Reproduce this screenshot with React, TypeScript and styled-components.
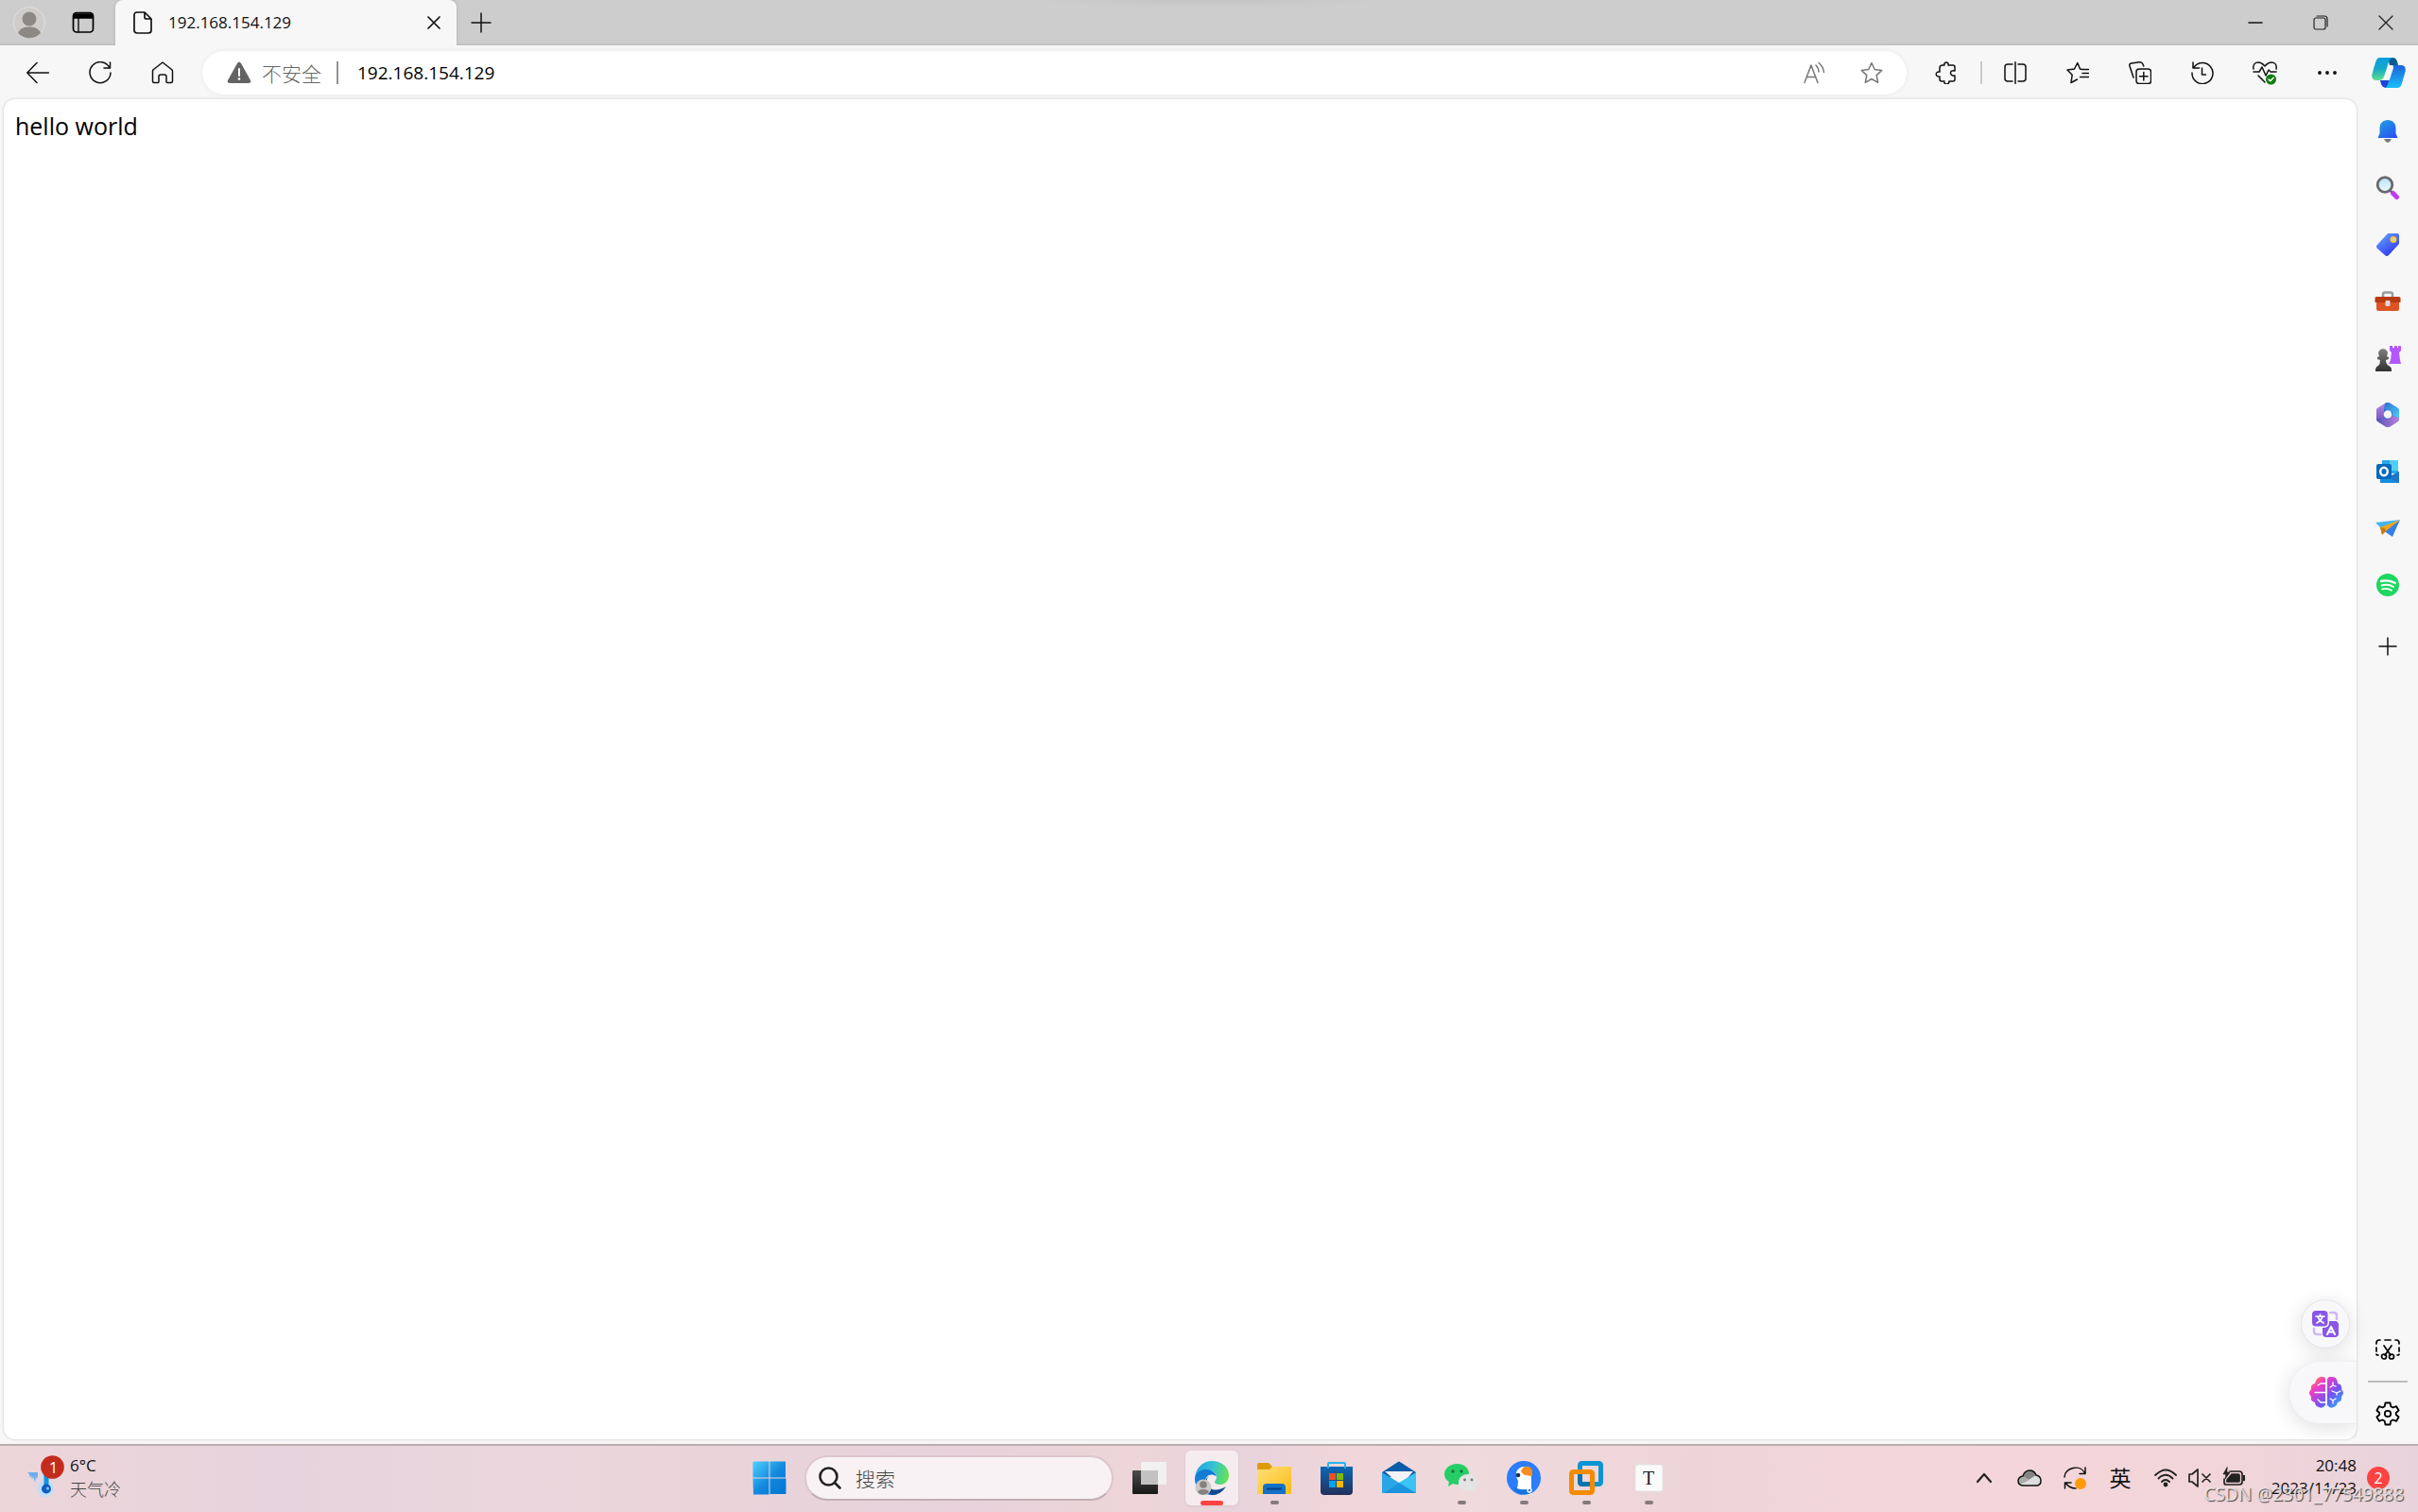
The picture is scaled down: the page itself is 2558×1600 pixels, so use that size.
import React from "react";
import styled, { createGlobalStyle, css } from "styled-components";

const Global = createGlobalStyle`
  *, *::before, *::after { box-sizing: border-box; }
  html, body { margin: 0; padding: 0; }
  body {
    font-family: "Open Sans", "Noto Sans", "Noto Sans CJK SC", sans-serif;
    color: #111;
    background: #f7f7f7;
  }
  button, input { font: inherit; color: inherit; }
`;

const Desktop = styled.div`
  position: relative;
  display: flex;
  flex-direction: column;
  min-height: 100vh;
`;

const Slot = styled.button<{ $w?: number; $h?: number }>`
  display: flex;
  flex: none;
  align-items: center;
  justify-content: center;
  width: ${(p) => p.$w ?? 66}px;
  height: ${(p) => p.$h ?? 48}px;
  margin: 0;
  padding: 0;
  border: 0;
  background: transparent;
`;

const Glyph = styled.svg<{ $w: number; $h: number }>`
  display: block;
  flex: none;
  width: ${(p) => p.$w}px;
  height: ${(p) => p.$h}px;
  fill: none;
  stroke-linecap: round;
  stroke-linejoin: round;
`;

type IconProps = {
  w?: number;
  h?: number;
  stroke?: string;
  sw?: number;
  children: React.ReactNode;
};

const Icon = ({ w = 24, h = 24, stroke = "none", sw = 1.5, children }: IconProps) => (
  <Glyph $w={w} $h={h} viewBox={`0 0 ${w} ${h}`} stroke={stroke} strokeWidth={sw} aria-hidden="true">
    {children}
  </Glyph>
);

/* ---------- title bar ---------- */

const TitleBar = styled.header`
  display: flex;
  height: 48px;
  background:
    radial-gradient(ellipse 190px 8px at 50% 0, #c4c4c4, transparent),
    linear-gradient(#cdcdcd 45px, #bdbdbd);
`;

const TitleStart = styled.div`
  display: flex;
  align-items: center;
  width: 122px;
`;

const Tab = styled.div`
  position: relative;
  display: flex;
  align-items: center;
  width: 361px;
  padding-left: 17px;
  background: #f7f7f7;
  border-radius: 8px 8px 0 0;
  box-shadow: 0 0 3px #aaa;
  clip-path: inset(0 -4px 0 -4px);
`;

const TabTitle = styled.button`
  display: flex;
  flex: 1;
  align-items: center;
  gap: 15px;
  height: 48px;
  padding: 0;
  border: 0;
  background: none;
  font-size: 17px;
  line-height: 24px;
`;

const WindowControls = styled.div`
  display: flex;
  margin-left: auto;
`;

/* ---------- toolbar ---------- */

const Toolbar = styled.nav`
  display: flex;
  align-items: center;
  height: 57px;
  padding-left: 7px;
  background: #f7f7f7;
`;

const AddressBar = styled.form`
  display: flex;
  flex: 1;
  align-items: center;
  height: 46px;
  margin: 0 9px;
  padding: 0 7px 0 26px;
  border-radius: 23px;
  background: #fff;
  box-shadow: 0 0 4px #e6e6e6;
`;

const Security = styled.button`
  display: flex;
  align-items: center;
  gap: 11px;
  padding: 0;
  border: 0;
  background: none;
  color: #666;
  font-family: "Noto Sans CJK SC", sans-serif;
  font-size: 21px;
  font-weight: 300;
  line-height: 24px;
`;

const Rule = styled.span<{ $tone: string; $side?: number }>`
  width: 2px;
  height: 24px;
  margin: 0 ${(p) => p.$side ?? 0}px;
  background: ${(p) => p.$tone};
`;

const UrlInput = styled.input`
  flex: 1;
  min-width: 0;
  padding: 0;
  border: 0;
  outline: 0;
  background: none;
  color: #000;
  font-size: 19px;
  line-height: 24px;
`;

const ToolDivider = styled.span`
  display: flex;
  justify-content: center;
  width: 7px;
`;

/* ---------- body ---------- */

const Body = styled.div`
  display: flex;
  flex: 1;
  padding-left: 4px;
  background: #f7f7f7;
`;

const Page = styled.main`
  position: relative;
  flex: 1;
  margin-bottom: 5px;
  padding: 11px 12px;
  border-radius: 12px;
  background: #fff;
  box-shadow: 0 0 3px #c4c4c4;
`;

const Hello = styled.p`
  margin: 0;
  color: #000;
  font-size: 25px;
  line-height: 34px;
`;

const Floating = styled.div`
  position: absolute;
  right: 0;
  bottom: 16px;
  display: flex;
  flex-direction: column;
  align-items: flex-end;
  gap: 13px;
`;

const floatBase = css`
  display: flex;
  align-items: center;
  justify-content: center;
  padding: 0;
  background: #f8f8fa;
  box-shadow: 0 4px 22px rgba(0, 0, 0, 0.13);
`;

const TranslateButton = styled.button`
  ${floatBase}
  width: 52px;
  height: 52px;
  margin-right: 7px;
  border: 1px solid #e4e4ee;
  border-radius: 50%;
`;

const BrainButton = styled.button`
  ${floatBase}
  width: 72px;
  height: 67px;
  padding-left: 6px;
  border: 1px solid #efeff2;
  border-right: 0;
  border-radius: 34px 0 0 34px;
  clip-path: inset(-30px 0 -14px -30px);
`;

const Sidebar = styled.aside`
  display: flex;
  flex-direction: column;
  align-items: center;
  width: 65px;
  padding: 4px 0 2px;
`;

const SideFoot = styled.div`
  display: flex;
  flex-direction: column;
  align-items: center;
  gap: 3px;
  margin-top: auto;
`;

const SideLine = styled.hr`
  width: 42px;
  height: 2px;
  margin: 0;
  border: 0;
  background: #bdbdbd;
`;

/* ---------- taskbar ---------- */

const Taskbar = styled.footer`
  display: grid;
  grid-template-columns: 1fr auto 1fr;
  align-items: center;
  height: 72px;
  padding-bottom: 2px;
  border-top: 2px solid #baacaf;
  background: linear-gradient(
    90deg,
    #edd6da 0%,
    #e7d3dd 11%,
    #ead6dc 22%,
    #ead4da 30%,
    #e8d2dc 39%,
    #edd5d8 47%,
    #e8d3dc 51%,
    #f0d6da 56%,
    #efdadc 61%,
    #eed4d9 70%,
    #f3d5da 83%,
    #f2d5d9 91%,
    #e8d3dc 100%
  );
`;

const Weather = styled.button`
  display: flex;
  align-items: center;
  gap: 6px;
  justify-self: start;
  padding: 0 0 3px 28px;
  border: 0;
  background: none;
  text-align: left;
  font-size: 17px;
  line-height: 24px;
`;

const WeatherIcon = styled.span`
  display: flex;
`;

const Stack = styled.span`
  display: flex;
  flex-direction: column;
`;

const Condition = styled.span`
  color: #444;
  font-family: "Noto Sans CJK SC", sans-serif;
  font-size: 18px;
  font-weight: 300;
`;

const Dock = styled.div`
  display: flex;
  align-items: center;
`;

const SearchBox = styled.label`
  display: flex;
  align-items: center;
  gap: 15px;
  width: 327px;
  height: 48px;
  margin: 0 5px 0 4px;
  padding: 0 13px;
  border: 2px solid #dcc7cc;
  border-bottom-color: #bfaeb1;
  border-radius: 24px;
  background: #f8f2f4;
`;

const SearchInput = styled.input`
  flex: 1;
  min-width: 0;
  padding: 0;
  border: 0;
  outline: 0;
  background: none;
  font-family: "Noto Sans CJK SC", sans-serif;
  font-size: 21px;
  font-weight: 300;
  line-height: 30px;
  &::placeholder { color: #444; opacity: 1; }
`;

const AppButton = styled.button<{ $active?: boolean }>`
  display: grid;
  grid-template-rows: 11px 36px 6px 5px;
  justify-items: center;
  width: 56px;
  height: 58px;
  margin: 0 5px;
  padding: 0;
  border: 0;
  border-radius: 6px;
  background: ${(p) => (p.$active ? "#f6ebee" : "transparent")};
  box-shadow: ${(p) => (p.$active ? "0 1px 1px 1px #dfcbd0" : "none")};
  & > svg { grid-row: 2; }
`;

const Indicator = styled.span<{ $active?: boolean }>`
  grid-row: 4;
  width: ${(p) => (p.$active ? 24 : 9)}px;
  height: ${(p) => (p.$active ? 5 : 4)}px;
  border-radius: 3px;
  background: ${(p) => (p.$active ? "#ff4343" : "#857a7d")};
`;

const Tray = styled.div`
  display: flex;
  align-items: center;
  justify-self: end;
  padding-right: 30px;
`;

const InputMode = styled(Slot)`
  padding-bottom: 2px;
  font-family: "Noto Sans CJK SC", sans-serif;
  font-size: 23px;
`;

const SystemGroup = styled.button`
  display: flex;
  align-items: center;
  gap: 12px;
  height: 48px;
  margin: 0 6px;
  padding: 0 6px;
  border: 0;
  background: none;
`;

const Clock = styled.button`
  display: flex;
  flex-direction: column;
  align-items: flex-end;
  width: 106px;
  padding: 0 0 2px;
  border: 0;
  background: none;
  font-size: 17px;
  line-height: 24px;
`;

const Notices = styled.button`
  width: 24px;
  height: 24px;
  margin-left: 11px;
  padding: 0;
  border: 0;
  border-radius: 50%;
  background: #ff4343;
  color: #fff;
  font-size: 16px;
  line-height: 24px;
`;

const Watermark = styled.span`
  position: absolute;
  right: 15px;
  bottom: 6px;
  color: rgba(236, 230, 232, 0.9);
  font-family: "Noto Sans", sans-serif;
  font-size: 19px;
  line-height: 26px;
  text-shadow: 1px 1px 1px #444;
  pointer-events: none;
`;

/* ---------- icons ---------- */

const Avatar = ({ size = 34 }: { size?: number }) => (
  <Glyph $w={size} $h={size} viewBox="0 0 34 34" aria-hidden="true">
    <circle cx="17" cy="17" r="16.5" fill="#cfcdc9" stroke="#e2e0dc" />
    <circle cx="17" cy="13" r="7.5" fill="#8c8884" />
    <path d="M5 28c2-5 6.500-6.500 12-6.500S27 23 29 28a16 16 0 0 1-24 0z" fill="#8c8884" />
  </Glyph>
);

const Copilot = () => (
  <Icon w={36} h={32}>
    <defs>
      <linearGradient id="cpA" x1="0" y1="0" x2="0" y2="1">
        <stop offset="0" stopColor="#0b9ddf" /><stop offset=".5" stopColor="#15a9c9" /><stop offset="1" stopColor="#5fe08a" />
      </linearGradient>
      <linearGradient id="cpB" x1="0" y1="0" x2="0" y2="1">
        <stop offset="0" stopColor="#1d62d8" /><stop offset="1" stopColor="#18c0fa" />
      </linearGradient>
    </defs>
    <path d="M17 0h5c4 0 5 3 6 8h-9z" fill="#0a5c8c" />
    <path d="M9 24h10l-3 8c-4 0-6-2-7-8z" fill="#1d45d6" />
    <path d="M9 0h13c-3 1-4 4-5 8l-4 12c-1 3-3 4-6 4H5c-4 0-5.500-3-4.500-7L4 5c1-3 2-5 5-5z" fill="url(#cpA)" />
    <path d="M22 8h9c4 0 5.500 3 4.500 7L32 27c-1 3-2 5-5 5H14c2-1 3-3 4-6l5-15z" fill="url(#cpB)" />
    <path d="M23 8.500h-2q-3 0-4 3l-3 9q-1 2-2 3h2q3 0 4-3z" fill="#f7f7f7" />
  </Icon>
);

const Bell = () => (
  <Icon w={22} h={26}>
    <defs><linearGradient id="bell" x1="0" y1="0" x2=".7" y2="1"><stop stopColor="#1aa5e4" /><stop offset="1" stopColor="#2a55f0" /></linearGradient></defs>
    <path d="M7 21h8l-2 3c-1 1-3 1-4 0z" fill="#74777c" />
    <path d="M11 1c5 0 8.500 3.500 8.500 8.500V15l2 5H.5l2-5V9.500C2.500 4.500 6 1 11 1z" fill="url(#bell)" />
  </Icon>
);

const Magnifier = () => (
  <Icon w={26} h={26}>
    <defs><linearGradient id="lens" x1="0" y1="0" x2="0" y2="1"><stop stopColor="#b8e2fa" /><stop offset="1" stopColor="#eef8ff" /></linearGradient></defs>
    <path d="M15 15l4 4" stroke="#666" strokeWidth="2.500" />
    <path d="M18.500 18.500l4 4" stroke="#c03bf3" strokeWidth="5" />
    <circle cx="10" cy="9.500" r="7.800" fill="url(#lens)" stroke="#68696b" strokeWidth="2.800" />
  </Icon>
);

const Tag = () => (
  <Icon w={26} h={26}>
    <defs><linearGradient id="tag" x1="0" y1="0" x2=".7" y2="1"><stop stopColor="#64adff" /><stop offset="1" stopColor="#3136ef" /></linearGradient></defs>
    <path d="M13 1h10q2 0 2 2v9L14 24q-2 2-4 0L2 17q-2-2 0-4z" fill="url(#tag)" />
    <circle cx="19" cy="7.500" r="2.500" stroke="#ffc928" strokeWidth="2" fill="#c9cfe8" />
  </Icon>
);

const Briefcase = () => (
  <Icon w={28} h={22}>
    <path d="M9 6V3.500q0-2 2-2h6q2 0 2 2V6" stroke="#999ca0" strokeWidth="2.500" />
    <path d="M2 10h24v9q0 2-2 2H4q-2 0-2-2z" fill="#df5221" />
    <path d="M.5 7.500q0-1.500 1.500-1.500h24q1.500 0 1.500 1.500V12H.5z" fill="#b93a12" />
    <rect x="11.500" y="10" width="5" height="6" rx="1" fill="#d7dadd" />
  </Icon>
);

const Chess = () => (
  <Icon w={28} h={28}>
    <defs><linearGradient id="pawn" x1="0" y1="0" x2="0" y2="1"><stop stopColor="#808080" /><stop offset="1" stopColor="#303030" /></linearGradient></defs>
    <path d="M16 1h3v2h2V1h3v2h1V1h3v5l-2 2 1 8 1 4H15l2-4 1-8-2-2z" fill="#b457ff" />
    <path d="M9 4a5 5 0 0 1 4 8l2 1v2l-3 1q0 4 3 6 3 1 3 5v1H1v-1q0-4 3-5 2-2 2-6l-3-1v-2l2-1a5 5 0 0 1 4-8z" fill="url(#pawn)" />
  </Icon>
);

const M365 = () => (
  <Icon w={24} h={26}>
    <defs>
      <linearGradient id="ma" x1="0" y1="0" x2="0" y2="1"><stop stopColor="#bb88df" /><stop offset="1" stopColor="#6f55c8" /></linearGradient>
      <linearGradient id="mb" x1="0" y1="0" x2="1" y2="1"><stop stopColor="#2c70d0" /><stop offset="1" stopColor="#4fd0f6" /></linearGradient>
      <linearGradient id="mc" x1="0" y1="0" x2="1" y2="0"><stop stopColor="#5552b8" /><stop offset="1" stopColor="#bd82dc" /></linearGradient>
    </defs>
    <path d="M10 .5q2-1 4 0l8 5q2 1 2 3v9q0 2-2 3l-8 5q-2 1-4 0l-8-5q-2-1-2-3v-9q0-2 2-3z" fill="#3a68c8" />
    <path d="M10 .5L2 5.500Q0 6.500 0 8.500v9q0 1 2 2l6-3.500V7z" fill="url(#ma)" />
    <path d="M9 1l1-.5q2-1 4 0l8 5q2 1 2 3v8l-7-2.500V10l-9-3z" fill="url(#mb)" />
    <path d="M0 17q0 2 2 3.500l8 5q2 1 4 0l8-5q2-1.500 2-4l-7-2.500-5 4-4-2z" fill="url(#mc)" />
    <circle cx="12" cy="12.500" r="4.300" fill="#f7f7f7" />
  </Icon>
);

const Outlook = () => (
  <Icon w={24} h={24}>
    <path d="M6 0h17v14H5z" fill="#2aa7e8" /><path d="M14 0h9v11h-9z" fill="#50d0f7" />
    <path d="M4 13l10 5 10-6v12H4z" fill="#168dde" /><path d="M24 12v12L12 18z" fill="#1f75c8" />
    <rect y="4" width="16" height="16" rx="2" fill="#0668b9" />
    <ellipse cx="8" cy="12" rx="3.800" ry="4.200" stroke="#fff" strokeWidth="2.400" />
  </Icon>
);

const PaperPlane = () => (
  <Icon w={26} h={20}>
    <path d="M0 4l26-3L6 10z" fill="#40b6f2" />
    <path d="M26 1L9 13l9 6z" fill="#3480e8" />
    <path d="M5 9l21-8-15 12-4 4z" fill="#f0a51c" />
    <path d="M11 13l-4 4-2-8 5 1z" fill="#c77c08" />
  </Icon>
);

const Spotify = () => (
  <Icon w={24} h={24}>
    <circle cx="12" cy="12" r="12" fill="#1ed760" />
    <path d="M5 8q8-2 15 2" stroke="#fff" strokeWidth="2.400" />
    <path d="M5.500 12.500q7-2 12.500 1.500" stroke="#fff" strokeWidth="2" />
    <path d="M6 16.500q6-1.500 10 1.300" stroke="#fff" strokeWidth="1.700" />
  </Icon>
);

const Screenshot = () => (
  <Icon w={26} h={24} stroke="#000" sw={1.700}>
    <path d="M1 6V5q0-3 3-3h1M10 2h6M21 2h1q3 0 3 3v1M1 10v4M25 10v4M3 18q-2 0-2-1M23 18q2 0 2-1" />
    <path d="M9 8l7 10M17 8l-7 10" />
    <circle cx="9" cy="19.500" r="2.500" /><circle cx="17" cy="19.500" r="2.500" />
  </Icon>
);

const Gear = () => (
  <Icon w={26} h={26} stroke="#000" sw={1.800}>
    <path d="M10.500 1.500h5l.8 3.700 2.200 1.300 3.600-1.300 2.500 4.300-2.800 2.500v2l2.800 2.500-2.500 4.300-3.600-1.300-2.200 1.300-.8 3.700h-5l-.8-3.700-2.200-1.300-3.600 1.300-2.500-4.300L4.200 14v-2L1.400 9.500l2.500-4.300 3.600 1.300 2.200-1.300z" />
    <circle cx="13" cy="13" r="3.200" />
  </Icon>
);

const TranslateIcon = () => (
  <Icon w={28} h={28}>
    <path d="M19 2h4q3 0 3 3v4M2 19v3q0 3 3 3h4" stroke="#cdb9f4" strokeWidth="2.500" />
    <rect x="11" y="11" width="17" height="17" rx="4" fill="#8857e6" />
    <rect x="-1" y="-1" width="19" height="19" rx="5" fill="#f8f8fa" />
    <rect width="16.500" height="16.500" rx="4" fill="#8857e6" />
    <path d="M4 6h9M8.500 4v2M11 6q-1 4-6 7M6 6q1 4 6 7" stroke="#fff" strokeWidth="1.700" />
    <path d="M16 25l4-8 4 8M17.500 22.500h5" stroke="#fff" strokeWidth="2" />
  </Icon>
);

const Brain = () => (
  <Icon w={36} h={33}>
    <defs>
      <linearGradient id="brain" x1="0" y1="0" x2="1" y2="1">
        <stop offset="0" stopColor="#ffa321" /><stop offset=".28" stopColor="#f33bc4" /><stop offset=".62" stopColor="#7255f3" /><stop offset="1" stopColor="#1fc0ff" />
      </linearGradient>
    </defs>
    <path d="M17 2v28q-3 4-7 2-4-1-4-5-5-1-4-6-4-4 0-8-1-5 4-6 1-6 6-7 4-1 5 2zM19 2q2-3 6-2 5 1 5 7 5 1 4 6 4 4 0 8 1 5-4 6-1 4-4 5-4 2-7-2z" fill="url(#brain)" />
    <path d="M17 7h-5l-3 2M17 16.500H6M17 27h-5l-3-3M25 6v3l-3 2M25 9l3 1M24 15l5 2 4-2M29 17v2M22 23l3 2 3-2M25 25v3" stroke="#fff" strokeWidth="1.300" />
  </Icon>
);

const WeatherArt = () => (
  <Icon w={40} h={46}>
    <path d="M1 18h11v3l-1 5-1-4-1 7-2-7-1 4-1-5-1 3-1-4z" fill="#6aaef0" />
    <path d="M17 16h6v12a8 8 0 1 1-6 0z" fill="#c5def8" stroke="#c5def8" strokeWidth="2" />
    <path d="M21 18v16" stroke="#1593dc" strokeWidth="5" /><circle cx="21" cy="35.500" r="5" fill="#0c5fc4" />
    <circle cx="22.500" cy="35" r="1.500" fill="#8cc4ff" />
    <circle cx="27.500" cy="12.500" r="12.300" fill="#c42b1c" />
    <text x="28.500" y="18.500" textAnchor="middle" fontSize="17" fill="#fff">1</text>
  </Icon>
);

const StartIcon = () => (
  <Icon w={36} h={36}>
    <defs><linearGradient id="win" x1="0" y1="0" x2="35" y2="35" gradientUnits="userSpaceOnUse"><stop stopColor="#4fd2ff" /><stop offset=".55" stopColor="#1287dc" /><stop offset="1" stopColor="#0076d4" /></linearGradient></defs>
    <path d="M1 .5h16.500v17H.5V1zM18.500.5H35v17H18.500zM.5 18.500h17v17H1zM18.500 18.500h17V35H18.500z" fill="url(#win)" />
  </Icon>
);

const TaskView = () => (
  <Icon w={36} h={36}>
    <defs><linearGradient id="tv" x1="0" y1="0" x2="0" y2="1"><stop stopColor="#4c4c4c" /><stop offset="1" stopColor="#191919" /></linearGradient></defs>
    <rect y="10" width="27" height="25" rx="1" fill="url(#tv)" />
    <rect x="9" y="1" width="27" height="24" rx="1" fill="#f1f1f1" />
    <rect x="9" y="10" width="18" height="15" fill="#c2c2c2" />
  </Icon>
);

const EdgeIcon = () => (
  <Icon w={36} h={36}>
    <defs>
      <linearGradient id="e1" x1="0" y1=".4" x2="1" y2=".6"><stop stopColor="#21a4e6" /><stop offset=".5" stopColor="#35c3d2" /><stop offset="1" stopColor="#68e44b" /></linearGradient>
      <linearGradient id="e2" x1="0" y1="0" x2="0" y2="1"><stop stopColor="#1577d2" /><stop offset="1" stopColor="#0f8edf" /></linearGradient>
    </defs>
    <path d="M0 18C1 7 9 0 18 0c11 0 18 7 18 15 0 6-4 10-9 10-4 0-6-1-6-3 0-1 2-2 2-5 0-4-4-7-9-7C8 10 3 13 0 18z" fill="url(#e1)" />
    <path d="M0 19C1 12 6 9 12 9c6 0 10 4 11 7-7-4-12 0-12 6 0 7 6 12 13 13-2 1-4 1-6 1C8 36 0 29 0 19z" fill="url(#e2)" />
    <path d="M15 16c-3 3-4 8 0 12 5 4 12 3 18-1-3 5-8 9-15 9-9-3-11-14-3-20z" fill="#124b93" />
    <circle cx="9" cy="28" r="8.500" fill="#cbc9c6" /><circle cx="9" cy="25" r="3.800" fill="#85817e" />
    <path d="M3 33q1-3 6-3t6 3a8 8 0 0 1-12 0z" fill="#85817e" />
  </Icon>
);

const FolderIcon = () => (
  <Icon w={36} h={36}>
    <defs><linearGradient id="fo" x1="0" y1="0" x2="1" y2="1"><stop stopColor="#ffe07a" /><stop offset="1" stopColor="#fcbc14" /></linearGradient></defs>
    <path d="M0 4q0-2 2-2h10l4 4h18q2 0 2 2v8H0z" fill="#dd9b0b" />
    <path d="M0 9h13l3-3h20v28q0 1-1 1H1q-1 0-1-1z" fill="url(#fo)" />
    <path d="M6 35v-7q0-4 4-4h16q4 0 4 4v7z" fill="#1371c6" />
    <path d="M11 29.500h14" stroke="#0b3f80" strokeWidth="2" />
  </Icon>
);

const StoreIcon = () => (
  <Icon w={36} h={36}>
    <defs><linearGradient id="st" x1="0" y1="0" x2="0" y2="1"><stop stopColor="#0b68b6" /><stop offset="1" stopColor="#23305a" /></linearGradient></defs>
    <path d="M9 8V3q0-1 1-1h16q1 0 1 1v5" stroke="#27b4ef" strokeWidth="2" />
    <path d="M1 6h34v26q0 4-4 4H5q-4 0-4-4z" fill="url(#st)" />
    <path d="M9 7V4M27 7V4" stroke="#27b4ef" strokeWidth="2" />
    <path d="M10 13h7v7h-7z" fill="#f25022" /><path d="M18 13h7v7h-7z" fill="#7fba00" />
    <path d="M10 21h7v7h-7z" fill="#00a4ef" /><path d="M18 21h7v7h-7z" fill="#ffb900" />
  </Icon>
);

const MailIcon = () => (
  <Icon w={36} h={36}>
    <path d="M0 12L17 1q1-1 2 0l17 11v5H0z" fill="#0a5ba9" />
    <path d="M3 11h30L20 26z" fill="#f4f4f6" />
    <path d="M0 12l18 11 18 10v1H1q-1 0-1-1z" fill="#2aa6e6" />
    <path d="M36 12v22H2l16-11z" fill="#3cc3f5" /><path d="M18 23l18 11H2z" fill="#1c93dd" />
  </Icon>
);

const WechatIcon = () => (
  <Icon w={36} h={36}>
    <path d="M13 3c8 0 13 4 13 11s-5 11-13 11l-4-1-5 3 1-5q-5-3-5-8C0 8 6 3 13 3z" fill="#27ce68" />
    <circle cx="9" cy="11" r="1.700" fill="#176e3c" /><circle cx="18" cy="11" r="1.700" fill="#176e3c" />
    <path d="M25 14c6 0 11 3 11 9q0 4-3 6v3l-4-1c-8 2-14-2-14-8s5-9 10-9z" fill="#e4e4e4" />
    <circle cx="21.500" cy="20" r="1.400" fill="#777" /><circle cx="29" cy="20" r="1.400" fill="#777" />
  </Icon>
);

const BirdIcon = () => (
  <Icon w={36} h={36}>
    <circle cx="18" cy="18" r="18" fill="#2b7dfb" />
    <path d="M10 14c0-5 4-8 9-8 6 0 8 4 7 10v19q-10 3-16-4 2-4 2-10-2-3-2-7z" fill="#fff" />
    <path d="M15 11q2-6 8-5 5 1 4 9-2 2-5 0-4 1-7-4z" fill="#f78d20" />
    <circle cx="12" cy="15" r="2.300" fill="#1c3156" />
    <path d="M6 27q8 5 21 2l-1 5q-8 4-16-1z" fill="#1674df" /><circle cx="24" cy="31" r="2" stroke="#fff" strokeWidth="1.500" />
  </Icon>
);

const VmIcon = () => (
  <Icon w={36} h={36}>
    <rect x="11.500" y="2.500" width="22" height="22" rx="2" stroke="#0995d3" strokeWidth="5" />
    <rect x="2.500" y="11.500" width="22" height="22" rx="2" stroke="#f38b00" strokeWidth="5" />
    <path d="M11.500 14v8q0 2.500 2.500 2.500h8" stroke="#0875ae" strokeWidth="5" strokeLinecap="butt" />
  </Icon>
);

const TyporaIcon = () => (
  <Icon w={36} h={36}>
    <path d="M7 2l27 3-3 29-27-3z" fill="#e4e1e2" />
    <rect x="4" y="4" width="29" height="28" rx="2" fill="#fafafa" stroke="#ddd" strokeWidth=".6" />
    <text x="18" y="25" textAnchor="middle" fontFamily="Liberation Serif, serif" fontSize="20" fill="#222">T</text>
  </Icon>
);

const sidebarApps: [string, React.ReactNode][] = [
  ["通知", <Bell />], ["搜索", <Magnifier />], ["购物", <Tag />], ["工具", <Briefcase />],
  ["游戏", <Chess />], ["Microsoft 365", <M365 />], ["Outlook", <Outlook />],
  ["Drop", <PaperPlane />], ["Spotify", <Spotify />],
];

const dockApps: { name: string; icon: React.ReactNode; running?: boolean; active?: boolean }[] = [
  { name: "任务视图", icon: <TaskView /> },
  { name: "Microsoft Edge", icon: <EdgeIcon />, running: true, active: true },
  { name: "文件资源管理器", icon: <FolderIcon />, running: true },
  { name: "Microsoft Store", icon: <StoreIcon /> },
  { name: "邮件", icon: <MailIcon /> },
  { name: "微信", icon: <WechatIcon />, running: true },
  { name: "浏览器", icon: <BirdIcon />, running: true },
  { name: "VMware", icon: <VmIcon />, running: true },
  { name: "Typora", icon: <TyporaIcon />, running: true },
];

const INK = "#111";

const toolIcons: [string, React.ReactNode][] = [
  ["分屏", <Icon stroke={INK}><path d="M12 .8v22.500M9 3H4Q1 3 1 6v12q0 3 3 3h5M15 3h5q3 0 3 3v12q0 3-3 3h-5" /></Icon>],
  ["收藏夹", <Icon stroke={INK}><path d="M17 8.500l-2.500-.5L11.800 1.500 8.500 8 1 9l5.200 5.200L5 22.500l6.500-3.500M17 12.500h6.500M17 8.500h6.500M14.500 16.500h9" /></Icon>],
  ["集锦", <Icon stroke={INK}><rect x="8" y="8" width="15.500" height="15.500" rx="3" /><path d="M15.800 11.500v8.500M11.500 15.800H20M5 17L1 5q-.8-2.300 1.500-3L11.500.8Q14 .5 15 3l.8 2" /></Icon>],
  ["历史记录", <Icon stroke={INK}><path d="M2 1v6h6.500M2.500 7A11 11 0 1 1 1 12M11.500 7v7h4" /></Icon>],
  ["浏览器概要", (
    <Icon w={26} h={26} stroke={INK}>
      <path d="M1 9C0 4 3 2 6 2c4 0 6 3 7 4 1-1 3-4 7-4 3 0 6 2 5 7M1 12h6l3-5 4 9 3-6 2 2h6M6 16l7 7" />
      <circle cx="19.500" cy="20" r="5.500" fill="#107c10" stroke="none" /><path d="M17 20l1.800 1.800 3.200-3.500" stroke="#fff" />
    </Icon>
  )],
  ["设置及其他", <Icon><circle cx="4" cy="12" r="1.900" fill={INK} /><circle cx="12" cy="12" r="1.900" fill={INK} /><circle cx="20" cy="12" r="1.900" fill={INK} /></Icon>],
];

export default function App() {
  return (
    <Desktop>
      <Global />
      <TitleBar>
        <TitleStart>
          <Slot $w={62} aria-label="个人资料"><Avatar /></Slot>
          <Slot $w={52} aria-label="标签页操作">
            <Icon stroke="#000" sw={1.700}>
              <rect x="1.500" y="1.500" width="21" height="20.500" rx="3.500" />
              <path d="M2 3h20v4H2z" fill="#000" /><path d="M7 7v15" strokeWidth="1.300" />
            </Icon>
          </Slot>
        </TitleStart>
        <Tab>
          <TabTitle>
            <Icon stroke={INK} sw={1.700}><path d="M6 1h8l7 7v12q0 3-3 3H6q-3 0-3-3V4q0-3 3-3zM14 1v5q0 2 2 2h5" /></Icon>
            192.168.154.129
          </TabTitle>
          <Slot $w={48} aria-label="关闭标签页"><Icon w={14} h={14} stroke={INK} sw={1.700}><path d="M1 1l12 12M13 1L1 13" /></Icon></Slot>
        </Tab>
        <Slot $w={52} aria-label="新建标签页"><Icon stroke={INK}><path d="M12 2v20M2 12h20" /></Icon></Slot>
        <WindowControls>
          <Slot $w={69} aria-label="最小化"><Icon w={16} h={16} stroke={INK}><path d="M1 8h14" /></Icon></Slot>
          <Slot $w={69} aria-label="还原"><Icon w={16} h={16} stroke="#222" sw={1.200}><rect x="1" y="3" width="12" height="12" rx="2" /><path d="M4 1h8q3 0 3 3v8" /></Icon></Slot>
          <Slot $w={69} aria-label="关闭"><Icon w={16} h={16} stroke="#222" sw={1.300}><path d="M1 1l14 14M15 1L1 15" /></Icon></Slot>
        </WindowControls>
      </TitleBar>

      <Toolbar>
        <Slot aria-label="后退"><Icon stroke={INK}><path d="M23.500 12H1M11 1.500L.8 12 11 22.500" /></Icon></Slot>
        <Slot aria-label="刷新"><Icon stroke={INK}><path d="M22 7A11 11 0 1 0 23 12M22.500 1v6H16" /></Icon></Slot>
        <Slot aria-label="主页"><Icon stroke={INK}><path d="M1.500 10.500q0-1.500 1-2L12 1l9.500 7.500q1 .5 1 2V21q0 1.500-1.500 1.500h-4q-1 0-1-1V16q0-2-2-2h-4q-2 0-2 2v5.500q0 1-1 1H3q-1.500 0-1.500-1.500z" /></Icon></Slot>
        <AddressBar onSubmit={(e) => e.preventDefault()}>
          <Security type="button">
            <Icon w={26}><path d="M11 2q2-3 4 0l10 18q1 3-2 3H3q-3 0-2-3z" fill="#636363" /><path d="M13 8v7" stroke="#fff" strokeWidth="2" /><circle cx="13" cy="18.500" r="1.300" fill="#fff" /></Icon>
            不安全
          </Security>
          <Rule $tone="#929292" $side={16} />
          <Slot as="span" $w={4} $h={24} />
          <UrlInput aria-label="地址栏" defaultValue="192.168.154.129" />
          <Slot type="button" $w={60} aria-label="朗读此页"><Icon stroke="#777"><path d="M1 22.500L8 4l7 18.500M3.500 16.500h9M13 4q3 3 3 7M16 1.500q5 4 5.500 10" /></Icon></Slot>
          <Slot type="button" $w={60} aria-label="收藏"><Icon stroke="#777"><path d="M12 1.500l3.200 7 7.600.9-5.600 5.200 1.500 7.700L12 18.500l-6.700 3.800 1.500-7.700L1.200 9.400l7.600-.9z" /></Icon></Slot>
        </AddressBar>
        <Slot aria-label="扩展"><Icon stroke={INK}><path d="M5 7q0-3 3-3h2c-1-4 5-4 4 0h5q2 0 2 2v4c-6-2-6 6 0 5v4q0 2-2 2h-4c0 4-6 4-5 0H7q-2 0-2-2v-3c-5 1-5-6 0-5z" /></Icon></Slot>
        <ToolDivider><Rule $tone="#cacaca" /></ToolDivider>
        {toolIcons.map(([name, icon]) => <Slot key={name} aria-label={name}>{icon}</Slot>)}
        <Slot $w={63} aria-label="Copilot"><Copilot /></Slot>
      </Toolbar>

      <Body>
        <Page>
          <Hello>hello world</Hello>
          <Floating>
            <TranslateButton aria-label="翻译"><TranslateIcon /></TranslateButton>
            <BrainButton aria-label="助手"><Brain /></BrainButton>
          </Floating>
        </Page>
        <Sidebar>
          {sidebarApps.map(([name, icon]) => <Slot key={name} $w={64} $h={60} aria-label={name}>{icon}</Slot>)}
          <Slot $w={64} $h={70} aria-label="自定义"><Icon w={20} h={20} stroke={INK} sw={1.500}><path d="M10 1v18M1 10h18" /></Icon></Slot>
          <SideFoot>
            <Slot $w={64} $h={60} aria-label="屏幕截图"><Screenshot /></Slot>
            <SideLine />
            <Slot $w={64} $h={60} aria-label="设置"><Gear /></Slot>
          </SideFoot>
        </Sidebar>
      </Body>

      <Taskbar>
        <Weather>
          <WeatherIcon><WeatherArt /></WeatherIcon>
          <Stack><span>6°C</span><Condition>天气冷</Condition></Stack>
        </Weather>
        <Dock>
          <Slot aria-label="开始"><StartIcon /></Slot>
          <SearchBox>
            <Icon stroke="#222" sw={2.600}><circle cx="10.500" cy="10.500" r="9" /><path d="M17.500 17.500l5 5" /></Icon>
            <SearchInput aria-label="搜索" placeholder="搜索" />
          </SearchBox>
          {dockApps.map((a) => (
            <AppButton key={a.name} $active={a.active} aria-label={a.name}>
              {a.icon}
              {a.running && <Indicator $active={a.active} />}
            </AppButton>
          ))}
        </Dock>
        <Tray>
          <Slot $w={48} aria-label="显示隐藏的图标"><Icon w={18} h={12} stroke="#222" sw={2.200}><path d="M2 10l7-8 7 8" /></Icon></Slot>
          <Slot $w={48} aria-label="OneDrive">
            <Icon w={26} h={20}>
              <path d="M7 18q-6 0-6-5 0-4 5-5 2-6 7-6 5 0 7 5 5 1 5 6 0 5-5 5z" fill="#dedede" />
              <path d="M6 8q2-6 7-6 5 0 7 5l-8 5z" fill="#858585" /><path d="M1 13q0-4 5-5l7 4-10 5z" fill="#ababab" />
              <path d="M7 18q-6 0-6-5 0-4 5-5 2-6 7-6 5 0 7 5 5 1 5 6 0 5-5 5z" stroke="#111" strokeWidth="1.500" />
            </Icon>
          </Slot>
          <Slot $w={48} aria-label="Windows 更新">
            <Icon stroke={INK}><path d="M1 11C1 1 18-3 22.500 7M23 1v6.500h-6M1.500 23v-6H8M2 17q4 6 11 6" /><circle cx="18" cy="18" r="6" fill="#ff9a0a" stroke="none" /></Icon>
          </Slot>
          <InputMode $w={48} aria-label="输入法">英</InputMode>
          <SystemGroup aria-label="网络、音量、电池">
            <Icon stroke="#222" sw={1.800}><path d="M1 9q11-11 22 0M4.500 12.500q7.500-7.500 15 0M8 16q4-4 8 0" /><circle cx="12" cy="19" r="1.500" fill="#222" stroke="#222" /></Icon>
            <Icon stroke="#222" sw={1.700}><path d="M1 8h3l6-5v18l-6-5H1zM15 8l8 8M23 8l-8 8" /></Icon>
            <Icon stroke="#222" sw={1.700}><path d="M8 5h10q3 0 3 3v8q0 3-3 3H4q-2 0-2-2v-4" /><path d="M10 8h7q1 0 1 1v6q0 1-1 1H5v-2z" fill="#222" /><path d="M23 10v4" strokeWidth="2.500" /><path d="M5 1L1 8h3l-1 5 5-7H5z" fill="#222" strokeWidth=".8" /></Icon>
          </SystemGroup>
          <Clock><span>20:48</span><span>2023/11/23</span></Clock>
          <Notices aria-label="通知">2</Notices>
        </Tray>
      </Taskbar>
      <Watermark>CSDN @2301_77549888</Watermark>
    </Desktop>
  );
}
